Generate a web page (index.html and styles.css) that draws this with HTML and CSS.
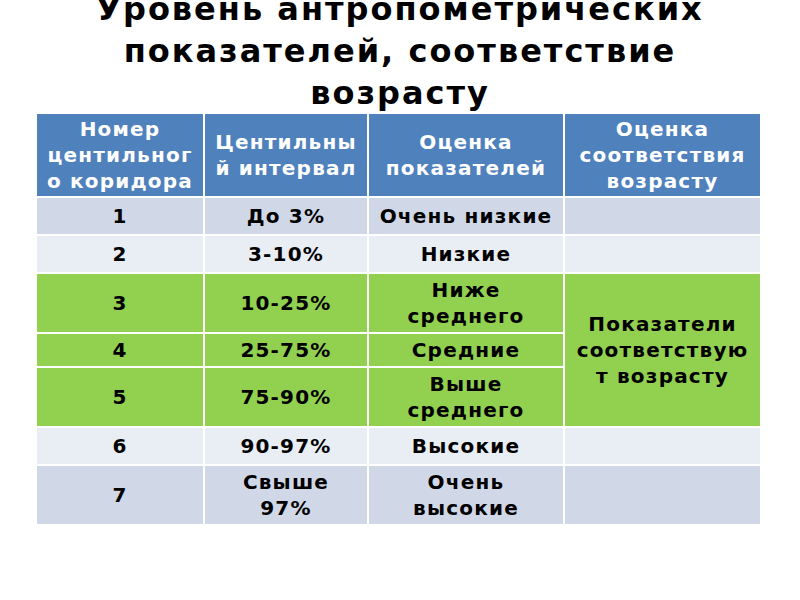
FILE: index.html
```html
<!DOCTYPE html>
<html lang="ru">
<head>
<meta charset="utf-8">
<link rel="stylesheet" href="styles.css">
</head>
<body>
<h1 class="title">Уровень антропометрических показателей, соответствие возрасту</h1>
<table class="grid">
  <colgroup>
    <col class="c1"><col class="c2"><col class="c3"><col class="c4">
  </colgroup>
  <thead>
    <tr class="head">
      <th>Номер<br>центильног<br>о коридора</th>
      <th>Центильны<br>й интервал</th>
      <th>Оценка<br>показателей</th>
      <th>Оценка<br>соответствия<br>возрасту</th>
    </tr>
  </thead>
  <tbody>
    <tr class="r1 dark"><td>1</td><td>До 3%</td><td>Очень низкие</td><td></td></tr>
    <tr class="r2 light"><td>2</td><td>3-10%</td><td>Низкие</td><td></td></tr>
    <tr class="r3 green"><td>3</td><td>10-25%</td><td>Ниже<br>среднего</td><td rowspan="3" class="span">Показатели<br>соответствую<br>т возрасту</td></tr>
    <tr class="r4 green"><td>4</td><td>25-75%</td><td>Средние</td></tr>
    <tr class="r5 green"><td>5</td><td>75-90%</td><td>Выше<br>среднего</td></tr>
    <tr class="r6 light"><td>6</td><td>90-97%</td><td>Высокие</td><td></td></tr>
    <tr class="r7 dark"><td>7</td><td>Свыше<br>97%</td><td>Очень<br>высокие</td><td></td></tr>
  </tbody>
</table>
</body>
</html>
```

FILE: styles.css
```css
html, body {
  margin: 0;
  padding: 0;
  background: #ffffff;
  width: 800px;
  height: 600px;
  overflow: hidden;
  font-family: "DejaVu Sans", "Noto Sans", sans-serif;
}

.title {
  margin: -12px 0 -2px 0;
  padding: 0 60px;
  font-size: 32px;
  line-height: 42px;
  font-weight: bold;
  text-align: center;
  color: #000000;
  letter-spacing: 2px;
}

.grid {
  margin-left: 35px;
  width: 725px;
  border-collapse: collapse;
  table-layout: fixed;
}

.c1 { width: 168px; }
.c2 { width: 164px; }
.c3 { width: 196px; }
.c4 { width: 197px; }

.grid th,
.grid td {
  border: 2px solid #ffffff;
  padding: 0;
  text-align: center;
  vertical-align: middle;
  font-weight: bold;
  font-size: 20px;
  line-height: 26px;
  letter-spacing: 1.2px;
  white-space: nowrap;
}

.grid th {
  background: #4f81bd;
  color: #ffffff;
}

.grid td { color: #000000; }

.head { height: 84px; }
.r1 { height: 38px; }
.r2 { height: 38px; }
.r3 { height: 60px; }
.r4 { height: 34px; }
.r5 { height: 60px; }
.r6 { height: 38px; }
.r7 { height: 60px; }

.dark td { background: #d0d8e8; }
.light td { background: #e9edf4; }
.green td { background: #92d050; }
```
